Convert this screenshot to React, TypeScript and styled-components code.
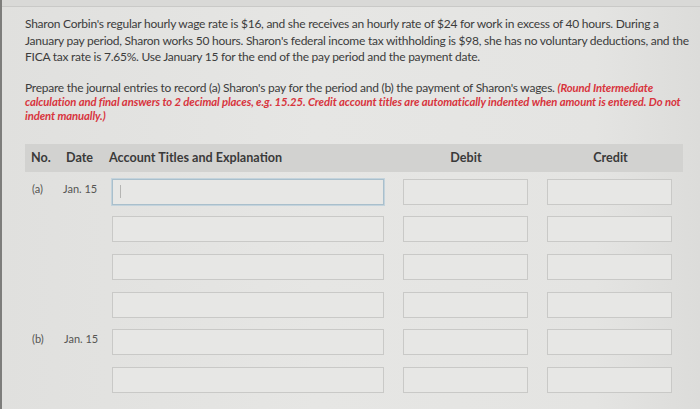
import React from 'react';
import styled, { createGlobalStyle } from 'styled-components';

const GlobalStyle = createGlobalStyle`
  html, body {
    margin: 0;
    padding: 0;
    background: #e3e3e1;
  }
  body {
    font-family: Lato, "Open Sans", "Liberation Sans", sans-serif;
  }
`;

const Screen = styled.div`
  width: 700px;
  height: 409px;
  box-sizing: border-box;
  border-left: 2px solid #7d7d7b;
  background: linear-gradient(90deg, #e0e0de 0%, #e6e6e4 45%, #e4e4e2 85%, #dcdcda 100%);
  overflow: hidden;
`;

const TopStrip = styled.div`
  height: 6px;
  background: #d9d9d7;
  border-bottom: 1px solid #c9c9c7;
`;

const Content = styled.div`
  padding: 9px 0 0 23px;
`;

const Question = styled.p`
  margin: 0;
  font-size: 12px;
  letter-spacing: -0.25px;
  line-height: 16.5px;
  color: #3c3c3c;
  white-space: nowrap;
`;

const Instructions = styled.p`
  margin: 15px 0 0;
  font-size: 12px;
  letter-spacing: -0.25px;
  line-height: 14.4px;
  color: #3c3c3c;
  white-space: nowrap;
`;

const Note = styled.em`
  color: #d8343d;
  font-weight: 700;
  font-size: 11.3px;
  letter-spacing: -0.1px;
`;

const Table = styled.div`
  margin-top: 20px;
  width: 658px;
`;

const cols = '38px 46px 285px 144px 1fr';

const HeaderRow = styled.div`
  display: grid;
  grid-template-columns: ${cols};
  align-items: center;
  height: 28px;
  background: #d2d2d0;
  font-size: 12.6px;
  font-weight: 700;
  color: #3a3a3a;
`;

const HeadCell = styled.div<{ $center?: boolean; $pad?: number }>`
  padding-left: ${(p) => p.$pad ?? 0}px;
  text-align: ${(p) => (p.$center ? 'center' : 'left')};
`;

const Row = styled.div`
  display: grid;
  grid-template-columns: ${cols};
  align-items: start;
  height: 37.6px;
  padding-top: 7px;
  box-sizing: border-box;
`;

const Label = styled.div<{ $pad?: number }>`
  padding: 3px 0 0 ${(p) => p.$pad ?? 0}px;
  font-size: 11px;
  color: #555553;
`;

const Field = styled.div<{ $width: number; $offset: number; $active?: boolean }>`
  box-sizing: border-box;
  width: ${(p) => p.$width}px;
  height: 26px;
  margin-left: ${(p) => p.$offset}px;
  border: 1px solid ${(p) => (p.$active ? '#a9bfcc' : '#c9c9c7')};
  box-shadow: ${(p) => (p.$active ? '0 0 0 1px #c3d3dc' : 'none')};
  background: #e7e7e5;
  display: flex;
  align-items: center;
  padding-left: 7px;
`;

const Caret = styled.span`
  width: 1px;
  height: 13px;
  background: #b5b5b3;
`;

type Entry = { no?: string; date?: string; active?: boolean };

const entries: Entry[] = [
  { no: '(a)', date: 'Jan. 15', active: true },
  {},
  {},
  {},
  { no: '(b)', date: 'Jan. 15' },
  {},
];

export default function App() {
  return (
    <>
      <GlobalStyle />
      <Screen>
        <TopStrip />
        <Content>
          <Question>
            Sharon Corbin's regular hourly wage rate is $16, and she receives an hourly rate of $24 for work in excess of 40 hours. During a
            <br />
            January pay period, Sharon works 50 hours. Sharon's federal income tax withholding is $98, she has no voluntary deductions, and the
            <br />
            FICA tax rate is 7.65%. Use January 15 for the end of the pay period and the payment date.
          </Question>
          <Instructions>
            Prepare the journal entries to record (a) Sharon's pay for the period and (b) the payment of Sharon's wages.{' '}
            <Note>
              (Round Intermediate
              <br />
              calculation and final answers to 2 decimal places, e.g. 15.25. Credit account titles are automatically indented when amount is entered. Do not
              <br />
              indent manually.)
            </Note>
          </Instructions>
          <Table>
            <HeaderRow>
              <HeadCell $pad={6}>No.</HeadCell>
              <HeadCell $pad={3}>Date</HeadCell>
              <HeadCell>Account Titles and Explanation</HeadCell>
              <HeadCell $center>Debit</HeadCell>
              <HeadCell $center>Credit</HeadCell>
            </HeaderRow>
            {entries.map((e, i) => (
              <Row key={i}>
                <Label $pad={7}>{e.no}</Label>
                <Label $pad={e.no === '(b)' ? 1 : 0}>{e.date}</Label>
                <Field $width={272} $offset={3} $active={e.active}>
                  {e.active && <Caret />}
                </Field>
                <Field $width={125} $offset={9} />
                <Field $width={125} $offset={9} />
              </Row>
            ))}
          </Table>
        </Content>
      </Screen>
    </>
  );
}
